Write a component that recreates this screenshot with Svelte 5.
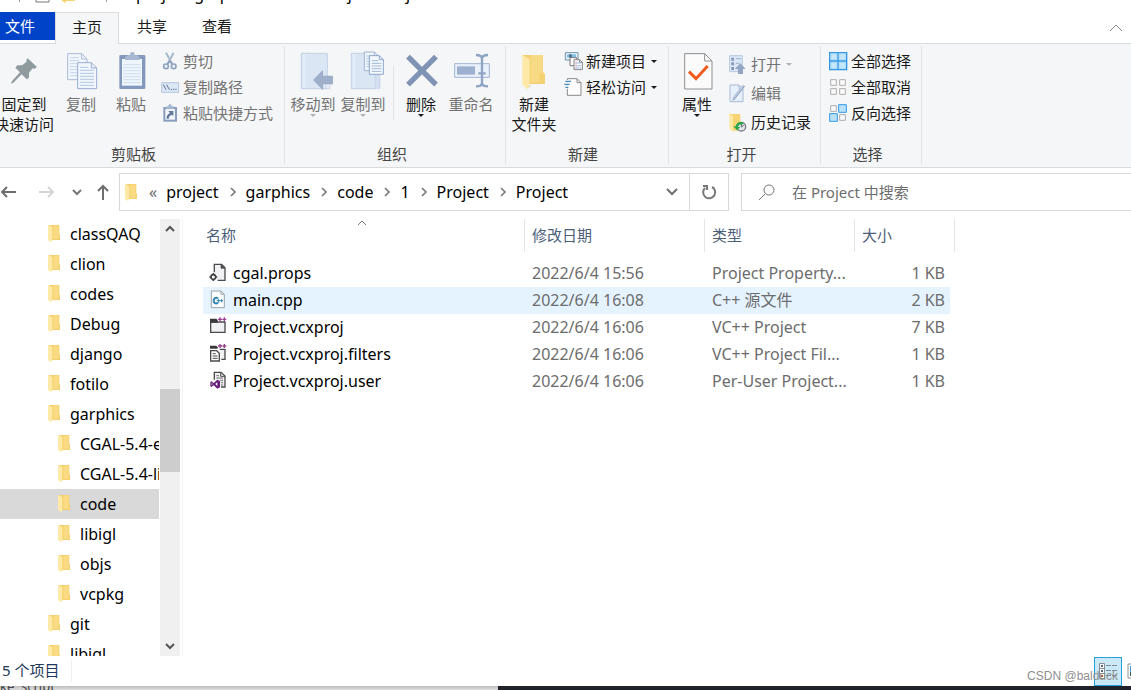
<script>
  const crumbs = ['project', 'garphics', 'code', '1', 'Project', 'Project'];

  const tree = [
    { name: 'classQAQ' },
    { name: 'clion' },
    { name: 'codes' },
    { name: 'Debug' },
    { name: 'django' },
    { name: 'fotilo' },
    { name: 'garphics' },
    { name: 'CGAL-5.4-examples', nested: true },
    { name: 'CGAL-5.4-library', nested: true },
    { name: 'code', nested: true },
    { name: 'libigl', nested: true },
    { name: 'objs', nested: true },
    { name: 'vcpkg', nested: true },
    { name: 'git' },
    { name: 'libigl' }
  ];

  const files = [
    { icon: 'props', name: 'cgal.props', date: '2022/6/4 15:56', type: 'Project Property...', size: '1 KB' },
    { icon: 'cpp', name: 'main.cpp', date: '2022/6/4 16:08', type: 'C++ 源文件', size: '2 KB' },
    { icon: 'project', name: 'Project.vcxproj', date: '2022/6/4 16:06', type: 'VC++ Project', size: '7 KB' },
    { icon: 'filters', name: 'Project.vcxproj.filters', date: '2022/6/4 16:06', type: 'VC++ Project Fil...', size: '1 KB' },
    { icon: 'user', name: 'Project.vcxproj.user', date: '2022/6/4 16:06', type: 'Per-User Project...', size: '1 KB' }
  ];

  let currentFolder = $state(9);
  let hoveredFile = $state(1);
  let query = $state('');
</script>

{#snippet page(x, y, w, h, stroke, fill, fold)}
  <path d="M{x} {y}H{x + w - fold}L{x + w} {y + fold}V{y + h}H{x}Z" {fill} {stroke} stroke-width="3" />
  <path d="M{x + w - fold} {y}V{y + fold}H{x + w}" fill="none" {stroke} stroke-width="3" />
{/snippet}

{#snippet folder()}
  <svg class="folder" viewBox="0 0 36 51" aria-hidden="true">
    <path d="M4 0H34V27L36 30V45H10Z" fill="#f5cf6b" />
    <path d="M16 2H32V42H16Z" fill="#fadb84" />
    <path d="M0 0L13 7V47L9 51L0 45Z" fill="#ffe9a6" />
  </svg>
{/snippet}

{#snippet bigIcon(name)}
  <svg class="big-icon" viewBox="0 0 120 120" aria-hidden="true">
    {#if name === 'pin'}
      <path d="M71 19L99 45L92 50L86 49L75 62V77L68 82L53 67L28 92L21 95L24 87L48 61L34 47L40 40H54L68 29L67 23Z" fill="#8f9b9f" />
    {:else if name === 'copy'}
      {@render page(20, 5, 58, 78, '#a9bad7', '#f1f6fd', 16)}
      <path d="M27 17H54M27 26H54M27 35H48M27 44H48M27 53H48M27 62H48M27 71H48" stroke="#c6d5ea" stroke-width="3" />
      {@render page(50, 32, 57, 78, '#98acce', '#f1f6fd', 16)}
      <path d="M57 46H82M57 55H99M57 64H99M57 73H99M57 82H99M57 91H99M57 100H99" stroke="#b4c6e1" stroke-width="3" />
    {:else if name === 'paste'}
      <rect x="25" y="9" width="78" height="102" rx="4" fill="#8498bd" />
      <path d="M33 21H93V101H33Z" fill="#eef5fc" />
      <path d="M37 38H89M37 47H89M37 56H89M37 65H89M37 74H89M37 83H89M37 92H89" stroke="#cfddee" stroke-width="3" />
      <path d="M42 24V15L52 9H76L86 15V24Z" fill="#a9b8d2" />
      <circle cx="64" cy="7" r="7" fill="#a9b8d2" />
    {:else if name === 'move'}
      <path d="M25 4H103V110H25Z" fill="#dbe6f5" stroke="#c1d0e6" stroke-width="3" />
      <path d="M33 6V108" stroke="#e9f0fa" stroke-width="4" />
      <path d="M99 72H107L111 77V110H99Z" fill="#e4ecf8" stroke="#c1d0e6" stroke-width="2" />
      <path d="M60 84L90 53V71H120V97H90V115Z" fill="#9fafca" />
    {:else if name === 'copyto'}
      <path d="M25 4H97V72L110 76V110H25Z" fill="#dbe6f5" stroke="#c1d0e6" stroke-width="3" />
      <path d="M33 6V108" stroke="#e9f0fa" stroke-width="4" />
      <path d="M97 110V76L102 69H110V110" fill="#d4e0f2" stroke="#c1d0e6" stroke-width="2" />
      {@render page(64, 0, 42, 56, '#a1b4d3', '#eff5fd', 12)}
      <path d="M70 12H88M70 20H88M70 28H88M70 36H88M70 44H88" stroke="#b4c6e1" stroke-width="3" />
      {@render page(79, 11, 42, 56, '#8fa5ca', '#f3f8fe', 12)}
      <path d="M86 26H106M86 34H115M86 42H115M86 50H115M86 58H115" stroke="#a2b6d5" stroke-width="3" />
    {:else if name === 'delete'}
      <path d="M21 14L105 98M105 14L21 98" stroke="#8093b4" stroke-width="16" />
    {:else if name === 'rename'}
      <path d="M11 35H115V76H11Z" fill="#e9f1fc" stroke="#a1b4d3" stroke-width="3" />
      <path d="M18 43H72V68H18Z" fill="#9eb0cf" />
      <path d="M75 9C86 9 93 12 93 20V92C93 100 86 103 75 103M111 9C100 9 93 12 93 20M93 92C93 100 100 103 111 103M82 64H104" fill="none" stroke="#8fa3c4" stroke-width="7" />
    {:else if name === 'newfolder'}
      <path d="M25 9H87V62L93 67V96H46Z" fill="#f3cf72" />
      <path d="M50 9H86V92H50Z" fill="#f8d984" />
      <path d="M76 96V65L80 61H88L93 67V96Z" fill="#f6d174" />
      <path d="M25 9L47 21V104L40 111L25 98Z" fill="#ffe9a8" />
      <path d="M47 98L53 101L40 111Z" fill="#d9d9d9" opacity=".5" />
    {:else if name === 'properties'}
      {@render page(23, 5, 82, 106, '#8f8f8f', '#fbfbfb', 22)}
      <path d="M36 59L57 80L92 42" fill="none" stroke="#f05a1c" stroke-width="9" />
    {/if}
  </svg>
{/snippet}

{#snippet smallIcon(name)}
  <svg class="small-icon" viewBox="0 0 54 54" aria-hidden="true">
    {#if name === 'cut'}
      <path d="M15 2L34 37M38 2L19 37" stroke="#aab9cf" stroke-width="6" />
      <circle cx="15" cy="43" r="7" fill="none" stroke="#8fa2c2" stroke-width="5" />
      <circle cx="38" cy="43" r="7" fill="none" stroke="#8fa2c2" stroke-width="5" />
      <path d="M20 35L26 27L33 35" fill="none" stroke="#8fa2c2" stroke-width="5" />
    {:else if name === 'path'}
      <path d="M2 14H53V43H2Z" fill="#dbe7f7" stroke="#b7c6dd" stroke-width="3" />
      <path d="M7 20L15 35M17 20L25 35M29 34H33M36 34H40M43 34H47" stroke="#5f7290" stroke-width="3" />
    {:else if name === 'shortcut'}
      <path d="M7 9H48V53H7Z" fill="#8a9dbd" />
      <path d="M13 15H42V47H13Z" fill="#f1f6fc" />
      <path d="M16 14V8L22 5H33L39 8V14Z" fill="#a9b8d2" />
      <circle cx="27" cy="4" r="4" fill="#a9b8d2" />
      <path d="M22 21H37V36L32 32C26 34 24 38 23 44H17C16 36 20 31 27 27Z" fill="#627899" />
    {:else if name === 'newitem'}
      <path d="M4 2H42V24H4Z" fill="#eef6fd" stroke="#6d91ad" stroke-width="3" />
      <path d="M9 7H36V17H9Z" fill="#81bfe8" />
      <path d="M15 7H23V16H15Z" fill="#4c6b82" />
      <path d="M18 17H38V41H18Z" fill="#fff" stroke="#777" stroke-width="3" />
      {@render page(30, 23, 25, 30, '#858585', '#fff', 8)}
      <path d="M34 33H51M34 41H51M34 48H51" stroke="#9cbbe5" stroke-width="3" />
      <path d="M36 27V52" stroke="#edabb6" stroke-width="2" />
    {:else if name === 'easy'}
      {@render page(10, 2, 41, 50, '#8b8b8b', '#fdfdfd', 12)}
      <path d="M3 10H22M0 19H18M3 28H14" stroke="#f5f6f7" stroke-width="8" />
      <path d="M4 10H21M1 19H17M4 28H13" stroke="#2377b8" stroke-width="3" />
    {:else if name === 'open'}
      <path d="M2 2H40V50H2Z" fill="#dae6f6" stroke="#b8c8e0" stroke-width="3" />
      <path d="M7 8H15V17H7ZM7 22H15V31H7ZM7 36H15V45H7Z" fill="#8397b8" />
      <path d="M21 11H36M21 25H31M21 39H25" stroke="#a9bad4" stroke-width="4" />
      <path d="M34 25L50 42H42V57H27V42H18Z" fill="#92a5c4" />
    {:else if name === 'edit'}
      {@render page(3, 3, 39, 50, '#a8b9d4', '#e8f0fb', 12)}
      <path d="M45 4L17 39L14 47" fill="none" stroke="#b8c8df" stroke-width="8" />
      <path d="M47 6L19 42L10 49" fill="none" stroke="#8d9fbc" stroke-width="3" />
    {:else if name === 'history'}
      <path d="M1 3H34V53H9Z" fill="#f7d474" />
      <path d="M1 3L12 9V50L8 54L1 48Z" fill="#ffe8a5" />
      <circle cx="37" cy="41" r="13" fill="#e1e5e6" stroke="#777f80" stroke-width="4" />
      <path d="M37 32V42L44 37" fill="none" stroke="#59656b" stroke-width="3" />
      <path d="M43 29C31 24 22 31 20 40H13L24 52L34 42H27C28 36 34 32 43 34Z" fill="#27a84a" />
    {:else if name === 'all'}
      <path d="M2 2H53V53H2ZM27 2V53M2 27H53" fill="#c6e8fb" stroke="#3298e6" stroke-width="4" />
      <path d="M6 6H23V23H6ZM32 6H49V23H32ZM6 32H23V49H6ZM32 32H49V49H32Z" fill="none" stroke="#a1d5f5" stroke-width="2" />
    {:else if name === 'none'}
      <path d="M5 5H22V22H5ZM32 5H49V22H32ZM5 32H22V49H5ZM32 32H49V49H32Z" fill="#fafafa" stroke="#adadad" stroke-width="3" />
    {:else if name === 'invert'}
      <path d="M5 5H22V22H5ZM32 32H49V49H32Z" fill="#fafafa" stroke="#adadad" stroke-width="3" />
      <path d="M29 2H52V25H29ZM2 29H25V52H2Z" fill="#b9e2fa" stroke="#3298e6" stroke-width="3" />
    {/if}
  </svg>
{/snippet}

{#snippet plusPlus(y)}
  <path d="M33 {y - 6}V{y + 6}M27 {y}H39M46 {y - 6}V{y + 6}M40 {y}H52" stroke="#9b3f96" stroke-width="4" />
{/snippet}

{#snippet fileIcon(name)}
  <svg class="file-icon" viewBox="0 0 54 60" aria-hidden="true">
    {#if name === 'props'}
      <path d="M16 28V4H38L48 14V52H26" fill="#f1f1f3" stroke="#4b4b4d" stroke-width="4" />
      <path d="M36 4V16H48" fill="#4b4b4d" stroke="#4b4b4d" stroke-width="2" />
      <circle cx="13" cy="42" r="13" fill="#fff" />
      <circle cx="13" cy="42" r="7" fill="none" stroke="#434345" stroke-width="5" />
      <path d="M13 30V35M13 49V54M1 42H6M20 42H25" stroke="#434345" stroke-width="5" />
    {:else if name === 'cpp'}
      {@render page(7, 3, 39, 50, '#9aa3a8', '#fbfcfd', 10)}
      <path d="M27 25C19 20 14 26 14 32C14 39 20 43 27 38" fill="none" stroke="#3287b2" stroke-width="6" />
      <path d="M29 26V38M23 32H35M38 27V37M34 32H42" stroke="#3287b2" stroke-width="3" />
    {:else if name === 'project'}
      <path d="M5 15H48V46H5Z" fill="#f1f1f3" stroke="#4b4b4d" stroke-width="4" />
      <path d="M3 5H22L26 10V17H3Z" fill="#39393b" />
      {@render plusPlus(7)}
    {:else if name === 'filters'}
      <path d="M3 5H22L26 10V14H3Z" fill="#39393b" />
      <path d="M32 16H48V46H37" fill="#f1f1f3" stroke="#4b4b4d" stroke-width="4" />
      <path d="M5 20H23L31 28V51H5Z" fill="#fff" stroke="#4b4b4d" stroke-width="4" />
      <path d="M11 29H20M11 36H26M11 43H26" stroke="#4b4b4d" stroke-width="3" />
      {@render plusPlus(6)}
    {:else if name === 'user'}
      <path d="M16 26V4H36L48 15V48H36" fill="#f1f1f3" stroke="#4b4b4d" stroke-width="4" />
      <path d="M35 4V16H48" fill="none" stroke="#4b4b4d" stroke-width="3" />
      <path d="M22 14H30M22 21H42M34 28H42M36 35H42M36 42H42" stroke="#6c6c6e" stroke-width="3" />
      <path d="M25 26L33 30V49L25 53L14 43L7 48L4 46V33L7 31L14 36ZM25 34L19 39L25 45ZM8 36V43L11 39Z" fill="#68217a" fill-rule="evenodd" />
    {/if}
  </svg>
{/snippet}

{#snippet big(icon, lines, opts = {})}
  <button class="big" class:dim={opts.dim} disabled={opts.dim}>
    {@render bigIcon(icon)}
    {#each lines as line}<span class="line">{line}</span>{/each}
    {#if opts.menu}<span class="caret"></span>{/if}
  </button>
{/snippet}

{#snippet small(icon, label, opts = {})}
  <button class="small" class:dim={opts.dim} disabled={opts.dim}>
    {@render smallIcon(icon)}
    <span>{label}</span>
    {#if opts.menu}<span class="caret"></span>{/if}
  </button>
{/snippet}

<div class="window">
  <header class="title">
    <span class="title-sep"></span>
    <svg class="title-icons" viewBox="0 0 48 3" aria-hidden="true">
      <path d="M1 0V2H14V0" fill="none" stroke="#777" />
      <path d="M27 0H40V1L31 1V3L27 1Z" fill="#f8d36f" />
    </svg>
    <span class="title-sep"></span>
    <span class="title-path">D:\project\garphics\code\1\Project\Project</span>
  </header>

  <nav class="tabs">
    <button class="tab file">文件</button>
    <button class="tab active">主页</button>
    <button class="tab">共享</button>
    <button class="tab">查看</button>
    <button class="collapse" aria-label="折叠功能区">
      <svg viewBox="0 0 14 8" aria-hidden="true"><path d="M1 7L7 1L13 7" fill="none" stroke="#8a8a8a" /></svg>
    </button>
  </nav>

  <div class="ribbon">
    <section class="group clipboard">
      <div class="tools">
        <div class="wide">{@render big('pin', ['固定到', '快速访问'])}</div>
        {@render big('copy', ['复制'], { dim: true })}
        {@render big('paste', ['粘贴'], { dim: true })}
        <div class="stack">
          {@render small('cut', '剪切', { dim: true })}
          {@render small('path', '复制路径', { dim: true })}
          {@render small('shortcut', '粘贴快捷方式', { dim: true })}
        </div>
      </div>
      <h2>剪贴板</h2>
    </section>
    <section class="group">
      <div class="tools">
        {@render big('move', ['移动到'], { dim: true, menu: true })}
        {@render big('copyto', ['复制到'], { dim: true, menu: true })}
        <span class="divider"></span>
        {@render big('delete', ['删除'], { menu: true })}
        {@render big('rename', ['重命名'], { dim: true })}
      </div>
      <h2>组织</h2>
    </section>
    <section class="group create">
      <div class="tools">
        {@render big('newfolder', ['新建', '文件夹'])}
        <div class="stack">
          {@render small('newitem', '新建项目', { menu: true })}
          {@render small('easy', '轻松访问', { menu: true })}
        </div>
      </div>
      <h2>新建</h2>
    </section>
    <section class="group">
      <div class="tools">
        {@render big('properties', ['属性'], { menu: true })}
        <div class="stack loose">
          {@render small('open', '打开', { dim: true, menu: true })}
          {@render small('edit', '编辑', { dim: true })}
          {@render small('history', '历史记录')}
        </div>
      </div>
      <h2>打开</h2>
    </section>
    <section class="group">
      <div class="tools">
        <div class="stack">
          {@render small('all', '全部选择')}
          {@render small('none', '全部取消')}
          {@render small('invert', '反向选择')}
        </div>
      </div>
      <h2>选择</h2>
    </section>
  </div>

  <div class="location">
    <div class="history">
      <button aria-label="后退"><svg viewBox="0 0 16 16" aria-hidden="true"><path d="M16 8H2M7 3L2 8L7 13" stroke="#6e6e6e" /></svg></button>
      <button aria-label="前进" disabled><svg viewBox="0 0 16 16" aria-hidden="true"><path d="M0 8H14M9 3L14 8L9 13" stroke="#d5d5d5" /></svg></button>
      <button aria-label="最近的位置"><svg viewBox="0 0 16 16" aria-hidden="true"><path d="M4 6L8 10L12 6" stroke="#777" /></svg></button>
      <button aria-label="上移"><svg viewBox="0 0 16 16" aria-hidden="true"><path d="M8 16V2M3 7L8 2L13 7" stroke="#6e6e6e" /></svg></button>
    </div>
    <div class="address">
      {@render folder()}
      <span class="more">«</span>
      {#each crumbs as crumb, i}
        {#if i > 0}
          <svg class="chevron" viewBox="0 0 6 10" aria-hidden="true"><path d="M1 1L5 5L1 9" fill="none" stroke="#777" stroke-width="1.6" /></svg>
        {/if}
        <button class="crumb">{crumb}</button>
      {/each}
      <button class="drop" aria-label="以前的位置">
        <svg viewBox="0 0 12 8" aria-hidden="true"><path d="M1 1L6 6L11 1" fill="none" stroke="#707070" stroke-width="2" /></svg>
      </button>
      <button class="refresh" aria-label="刷新">
        <svg viewBox="0 0 16 16" aria-hidden="true">
          <path d="M11 3A6 6 0 1 1 4 4" fill="none" stroke="#777" stroke-width="2" />
          <path d="M2 2H6V6" fill="none" stroke="#777" stroke-width="2" />
        </svg>
      </button>
    </div>
    <label class="search">
      <svg viewBox="0 0 16 16" aria-hidden="true"><circle cx="10" cy="6" r="5" /><path d="M6 10L0 16" /></svg>
      <input type="text" bind:value={query} placeholder="在 Project 中搜索" aria-label="搜索" />
    </label>
  </div>

  <div class="body">
    <nav class="tree">
      {#each tree as item, i}
        <button class="node" class:nested={item.nested} class:current={i === currentFolder} onclick={() => (currentFolder = i)}>
          {@render folder()}
          <span>{item.name}</span>
        </button>
      {/each}
    </nav>
    <div class="scrollbar">
      <svg viewBox="0 0 10 6" aria-hidden="true"><path d="M1 5L5 1L9 5" /></svg>
      <span class="above"></span>
      <span class="thumb"></span>
      <span class="below"></span>
      <svg viewBox="0 0 10 6" aria-hidden="true"><path d="M1 1L5 5L9 1" /></svg>
    </div>
    <main>
      <table>
        <colgroup><col class="c-name" /><col class="c-date" /><col class="c-type" /><col class="c-size" /></colgroup>
        <thead>
          <tr>
            <th class="first">
              <button>名称</button>
              <svg class="sort" viewBox="0 0 10 6" aria-hidden="true"><path d="M1 5L5 1L9 5" fill="none" stroke="#777" /></svg>
            </th>
            <th><button>修改日期</button></th>
            <th><button>类型</button></th>
            <th><button>大小</button></th>
          </tr>
        </thead>
        <tbody>
          {#each files as file, i}
            <tr class:hovered={i === hoveredFile} onmouseenter={() => (hoveredFile = i)}>
              <td class="name"><div>{@render fileIcon(file.icon)}<span>{file.name}</span></div></td>
              <td>{file.date}</td>
              <td>{file.type}</td>
              <td class="size">{file.size}</td>
            </tr>
          {/each}
        </tbody>
      </table>
    </main>
  </div>

  <footer class="status">
    <span class="count">5 个项目</span>
    <button class="view selected" aria-label="详细信息">
      <svg viewBox="0 0 18 18" aria-hidden="true">
        <path d="M.5 1.5H5.5V16.5H.5ZM.5 6.5H5.5M.5 11.5H5.5" fill="#fff" stroke="#8a8f93" />
        <path d="M2 4H4M2 9H4" stroke="#536c80" stroke-width="2" />
        <path d="M2 14H4" stroke="#c4604a" stroke-width="2" />
        <path d="M7 3.5H12M13 3.5H18M7 8.5H12M13 8.5H18M7 13.5H12M13 13.5H18" stroke="#7e8b93" />
      </svg>
    </button>
    <button class="view edge" aria-label="大图标">
      <svg viewBox="0 0 18 18" aria-hidden="true">
        <path d="M1 2H17V16H1Z" fill="#fff" stroke="#8a8f93" />
        <path d="M3 4H15V10H3Z" fill="#4ba3e0" /><path d="M3 10H15V14H3Z" fill="#2f5f45" />
      </svg>
    </button>
    <span class="watermark">CSDN @balduck</span>
  </footer>

  <div class="behind">
    <span class="behind-left">ke&nbsp; script</span>
    <span class="behind-right"></span>
  </div>
</div>

<style>
  :global(body) {
    background: #fff;
  }

  .window {
    display: flex;
    flex-direction: column;
    height: 100vh;
    overflow: hidden;
    color: #1a1a1a;
    font: 15px/20px 'Noto Sans', 'Noto Sans CJK SC', sans-serif;
  }

  button {
    margin: 0;
    padding: 0;
    border: 0;
    background: none;
    color: inherit;
    font: inherit;
    text-align: left;
    white-space: nowrap;
  }

  svg {
    display: block;
    flex: none;
    overflow: visible;
  }

  /* title strip */
  .title {
    display: flex;
    flex: none;
    height: 12px;
    padding-left: 19px;
    overflow: hidden;
  }
  .title-sep {
    width: 1px;
    height: 2px;
    background: #999;
  }
  .title-icons {
    width: 48px;
    height: 3px;
    margin: 0 23px 0 15px;
  }
  .title-path {
    margin: -16px 0 0 7px;
    color: #000;
    font-size: 16px;
  }

  /* tabs */
  .tabs {
    display: flex;
    flex: none;
    height: 31px;
    border-bottom: 1px solid #dadbdc;
  }
  .tab {
    height: 30px;
    padding: 0 17px 2px 18px;
  }
  .tab.file {
    width: 55px;
    height: 28px;
    padding: 0 5px;
    background: #0042c8;
    color: #fff;
  }
  .tab.active {
    height: 32px;
    padding: 0 16px 3px;
    border: 1px solid #dadbdc;
    border-bottom: 0;
    background: #f5f6f7;
  }
  .collapse {
    margin-left: auto;
    padding-right: 8px;
  }
  .collapse svg {
    width: 14px;
    height: 8px;
  }

  /* ribbon */
  .ribbon {
    display: flex;
    flex: none;
    height: 123px;
    border-bottom: 1px solid #dadbdc;
    background: #f5f6f7;
  }
  .group {
    display: flex;
    flex-direction: column;
    justify-content: space-between;
    margin: 2px 0 3px;
    padding: 0 9px 0 3px;
    border-right: 1px solid #e2e3e4;
  }
  .clipboard {
    margin-left: -6px;
    padding: 0 11px 0 0;
  }
  .create {
    padding-right: 11px;
  }
  .group:last-child {
    padding-right: 10px;
  }
  .group h2 {
    margin: 0;
    color: #444;
    font: inherit;
    text-align: center;
  }
  .tools {
    display: flex;
    align-items: flex-start;
  }
  .big {
    display: flex;
    flex-direction: column;
    align-items: center;
    width: 50px;
    padding-top: 6px;
  }
  .wide {
    margin-right: 2px;
  }
  .wide .big {
    width: 60px;
  }
  .big-icon {
    width: 40px;
    height: 40px;
    margin-bottom: 2px;
  }
  .line {
    display: block;
  }
  .dim {
    color: #737373;
  }
  .stack {
    display: flex;
    flex-direction: column;
    gap: 6px;
    padding: 5px 0 0 5px;
  }
  .stack.loose {
    gap: 9px;
    padding: 8px 0 0 7px;
  }
  .small {
    display: flex;
    align-items: center;
    gap: 4px;
  }
  .small-icon {
    width: 18px;
    height: 18px;
  }
  .caret {
    width: 0;
    border: 3px solid transparent;
    border-top-color: currentColor;
    border-bottom: 0;
  }
  .small .caret {
    margin-left: 1px;
  }
  .dim .caret {
    border-top-color: #b3b3b3;
  }
  .divider {
    width: 1px;
    height: 55px;
    margin: 19px 2px 0 5px;
    background: #e2e3e4;
  }

  /* location bar */
  .location {
    display: flex;
    flex: none;
    align-items: center;
    height: 48px;
    padding-bottom: 3px;
  }
  .history {
    display: flex;
    flex: none;
    align-items: center;
    gap: 14px;
    width: 119px;
  }
  .history svg {
    width: 16px;
    height: 16px;
    fill: none;
    stroke-width: 2px;
  }
  .history button:nth-child(2) {
    margin-left: 9px;
  }
  .history button:nth-child(4) {
    margin-left: -4px;
  }
  .address {
    display: flex;
    flex: 603 1 0;
    align-items: center;
    box-sizing: border-box;
    height: 38px;
    padding-left: 5px;
    border: 1px solid #d9d9d9;
    color: #000;
    font-size: 16px;
  }
  .folder {
    width: 12px;
    height: 17px;
  }
  .more {
    margin: 0 9px 0 12px;
    color: #666;
  }
  .chevron {
    width: 6px;
    height: 10px;
    margin: 0 10px 0 11px;
  }
  .drop {
    margin-left: auto;
    padding: 0 11px;
  }
  .drop svg {
    width: 12px;
    height: 8px;
  }
  .refresh {
    align-self: stretch;
    padding: 0 11px;
    border-left: 1px solid #d9d9d9;
  }
  .refresh svg {
    width: 16px;
    height: 16px;
  }
  .search {
    display: flex;
    flex: 372 1 0;
    align-items: center;
    box-sizing: border-box;
    height: 38px;
    margin-left: 12px;
    padding-left: 17px;
    border: 1px solid #d9d9d9;
    border-right: 0;
  }
  .search svg {
    width: 16px;
    height: 16px;
    fill: none;
    stroke: #777;
  }
  .search input {
    flex: 1;
    min-width: 0;
    margin-left: 17px;
    padding: 0;
    border: 0;
    outline: 0;
    background: none;
    color: #333;
    font: inherit;
  }
  .search input::placeholder {
    color: #6d6d6d;
    opacity: 1;
  }

  /* body */
  .body {
    display: flex;
    flex: 1;
    min-height: 0;
  }
  .tree {
    flex: none;
    width: 160px;
    overflow: hidden;
    color: #000;
    font-size: 16px;
  }
  .node {
    display: flex;
    align-items: center;
    gap: 10px;
    box-sizing: border-box;
    width: 159px;
    height: 30px;
    padding: 0 0 1px 48px;
    overflow: hidden;
  }
  .node.nested {
    padding-left: 58px;
  }
  .node.current {
    background: #d9d9d9;
  }
  .scrollbar {
    display: flex;
    flex: none;
    flex-direction: column;
    align-items: center;
    width: 20px;
    padding: 7px 0;
    box-sizing: border-box;
    background: #f0f0f0;
  }
  .scrollbar svg {
    width: 10px;
    height: 6px;
    fill: none;
    stroke: #555;
    stroke-width: 2px;
  }
  .above {
    flex: 157;
  }
  .thumb {
    flex: 83;
    width: 100%;
    background: #cdcdcd;
  }
  .below {
    flex: 171;
  }
  main {
    flex: 1;
    min-width: 0;
    margin-left: 2px;
    padding-left: 20px;
    border-left: 1px solid #f3f3f3;
  }

  table {
    width: 752px;
    border-spacing: 0;
    table-layout: fixed;
    color: #6d6d6d;
  }
  .c-name {
    width: 322px;
  }
  .c-date {
    width: 180px;
  }
  .c-type {
    width: 150px;
  }
  .c-size {
    width: 100px;
  }
  th {
    position: relative;
    padding: 0 0 8px;
    color: #4c607a;
    font-weight: 400;
  }
  th button {
    display: block;
    width: 100%;
    height: 33px;
    padding: 0 0 2px 7px;
    border-right: 1px solid #e5e5e5;
  }
  th.first button {
    padding-left: 3px;
  }
  .sort {
    position: absolute;
    top: 1px;
    left: calc(50% - 7px);
    width: 10px;
    height: 6px;
  }
  td {
    height: 25px;
    padding: 0 0 2px 7px;
    font-size: 16px;
    white-space: nowrap;
  }
  td.name {
    padding-left: 6px;
    color: #000;
  }
  td.name div {
    display: flex;
    align-items: center;
    gap: 6px;
  }
  .file-icon {
    width: 18px;
    height: 20px;
  }
  td.size {
    padding: 0 5px 2px 0;
    border-right: 5px solid #fff;
    text-align: right;
  }
  .hovered td {
    background: #e5f3ff;
  }

  /* status bar */
  .status {
    position: relative;
    display: flex;
    flex: none;
    align-items: center;
    height: 30px;
    color: #1e395b;
  }
  .count {
    margin-right: auto;
    padding: 0 12px 2px 2px;
    border-right: 1px solid #efefef;
  }
  .view {
    display: flex;
    align-items: center;
    justify-content: center;
    box-sizing: border-box;
    width: 28px;
    height: 29px;
  }
  .view.selected {
    border: 1px solid #26a0da;
    background: #cbe8f6;
  }
  .view.edge {
    justify-content: flex-start;
    width: 4px;
    margin-left: 5px;
    overflow: hidden;
  }
  .view svg {
    width: 18px;
    height: 18px;
  }
  .watermark {
    position: absolute;
    right: 13px;
    bottom: 0;
    color: #8f8f8f;
    font: 12px/20px 'Liberation Sans', sans-serif;
  }

  /* window edge underneath */
  .behind {
    display: flex;
    flex: none;
    height: 4px;
    overflow: hidden;
  }
  .behind-left {
    flex: 498;
    overflow: hidden;
    background: linear-gradient(#bdbdbd, #dedede);
    color: #444;
    font-size: 13px;
    line-height: 0;
  }
  .behind-right {
    flex: 633;
    background: #20222a;
  }
</style>
